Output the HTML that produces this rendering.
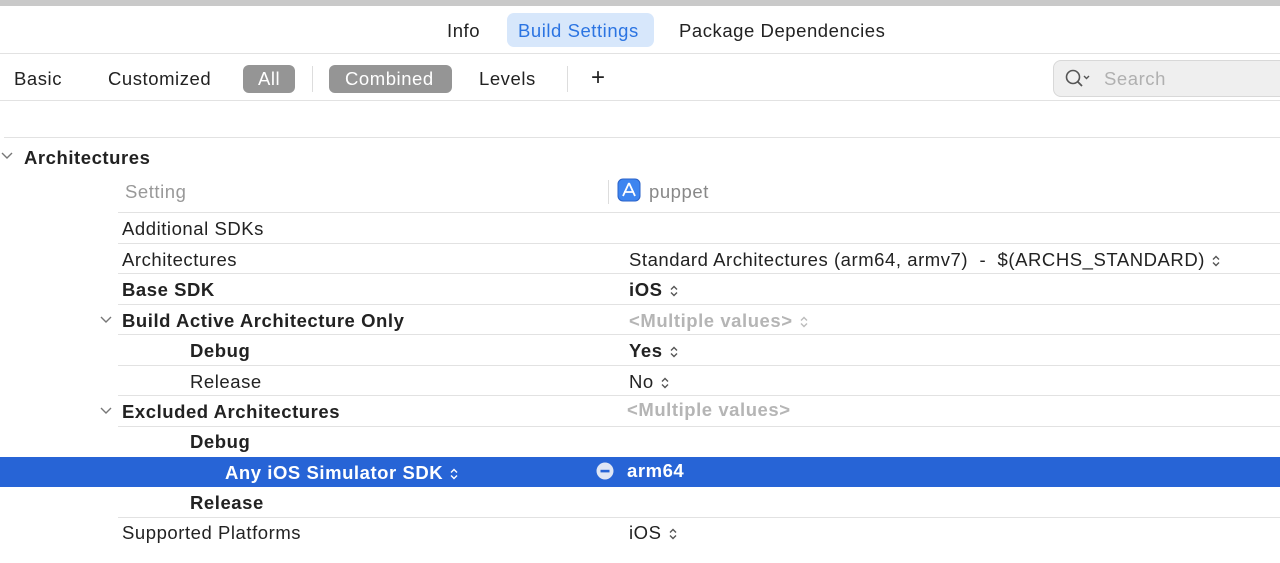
<!DOCTYPE html>
<html><head><style>
body{margin:0;width:1280px;height:563px;background:#fff;font-family:"Liberation Sans",sans-serif;font-size:18.5px;letter-spacing:0.55px;color:#222;position:relative;overflow:hidden}
.a{position:absolute;white-space:nowrap}
.ln{position:absolute;height:1px;background:#e2e2e2}
.b{font-weight:bold}
.g{color:#b5b5b5}
.ud{display:inline-block;width:8px;height:12px;margin-left:7px;vertical-align:-1px}
</style></head><body>
<svg width="0" height="0" style="position:absolute"><defs><symbol id="ud" viewBox="0 0 8 12"><path d="M1 4.5L4 1.5 7 4.5M1 7.5L4 10.5 7 7.5" fill="none" stroke="currentColor" stroke-width="1.4"/></symbol></defs></svg>
<div class="a" style="left:0;top:0;width:1280px;height:6px;background:#c9c9c9"></div>
<div class="a" style="left:447px;top:20px">Info</div>
<div class="a" style="left:507px;top:13px;width:147px;height:34px;background:#d7e7fb;border-radius:7px"></div>
<div class="a" style="left:518px;top:20px;color:#2b74e2">Build Settings</div>
<div class="a" style="left:679px;top:20px">Package Dependencies</div>
<div class="ln" style="left:0;top:53px;width:1280px"></div>
<div class="a" style="left:14px;top:68px">Basic</div>
<div class="a" style="left:108px;top:68px">Customized</div>
<div class="a" style="left:243px;top:65px;width:52px;height:28px;background:#959595;border-radius:6px"></div>
<div class="a" style="left:258px;top:68px;color:#fff">All</div>
<div class="a" style="left:312px;top:66px;width:1px;height:26px;background:#ddd"></div>
<div class="a" style="left:329px;top:65px;width:123px;height:28px;background:#959595;border-radius:6px"></div>
<div class="a" style="left:345px;top:68px;color:#fff">Combined</div>
<div class="a" style="left:479px;top:68px">Levels</div>
<div class="a" style="left:567px;top:66px;width:1px;height:26px;background:#ddd"></div>
<div class="a" style="left:591px;top:64px;font-size:24px;font-weight:300">+</div>
<div class="a" style="left:1053px;top:60px;width:240px;height:35px;background:#efefef;border:1px solid #d8d8d8;border-radius:8px"></div>
<svg class="a" style="left:1064px;top:68px" width="28" height="22"><circle cx="9" cy="9" r="6.5" fill="none" stroke="#555" stroke-width="1.6"/><line x1="13.5" y1="13.5" x2="18" y2="18" stroke="#555" stroke-width="1.8"/><path d="M20 8l2.5 2.5 2.5-2.5" fill="none" stroke="#555" stroke-width="1.4"/></svg>
<div class="a" style="left:1104px;top:68px;color:#b0b0b0">Search</div>
<div class="ln" style="left:0;top:100px;width:1280px"></div>
<div class="ln" style="left:4px;top:137px;width:1276px"></div>
<svg class="a" style="left:1px;top:151px" width="12" height="10"><path d="M1 2l5 5 5-5" fill="none" stroke="#777" stroke-width="1.4"/></svg>
<div class="a b" style="left:24px;top:147px">Architectures</div>
<div class="a" style="left:125px;top:181px;color:#999">Setting</div>
<div class="a" style="left:608px;top:180px;width:1px;height:24px;background:#ddd"></div>
<svg class="a" style="left:617px;top:178px" width="24" height="24"><rect x="1" y="1" width="22" height="22" rx="5" fill="#3d85f0" stroke="#2a62c9"/><path d="M12 5L6 18M12 5l6 13M7 14h10" stroke="#fff" stroke-width="1.8" fill="none"/></svg>
<div class="a" style="left:649px;top:181px;color:#888">puppet</div>
<div class="ln" style="left:118px;top:212px;width:1162px"></div>
<div class="a" style="left:122px;top:218px">Additional SDKs</div>
<div class="ln" style="left:118px;top:243px;width:1162px"></div>
<div class="a" style="left:122px;top:249px">Architectures</div>
<div class="a" style="left:629px;top:249px">Standard Architectures (arm64, armv7)&nbsp; - &nbsp;$(ARCHS_STANDARD)<svg class="ud" style="color:#555"><use href="#ud"/></svg></div>
<div class="ln" style="left:118px;top:273px;width:1162px"></div>
<div class="a b" style="left:122px;top:279px">Base SDK</div>
<div class="a b" style="left:629px;top:279px">iOS<svg class="ud" style="color:#555"><use href="#ud"/></svg></div>
<div class="ln" style="left:118px;top:304px;width:1162px"></div>
<svg class="a" style="left:100px;top:315px" width="12" height="10"><path d="M1 2l5 5 5-5" fill="none" stroke="#777" stroke-width="1.4"/></svg>
<div class="a b" style="left:122px;top:310px">Build Active Architecture Only</div>
<div class="a b g" style="left:629px;top:310px">&lt;Multiple values&gt;<svg class="ud" style="color:#bbb"><use href="#ud"/></svg></div>
<div class="ln" style="left:118px;top:334px;width:1162px"></div>
<div class="a b" style="left:190px;top:340px">Debug</div>
<div class="a b" style="left:629px;top:340px">Yes<svg class="ud" style="color:#555"><use href="#ud"/></svg></div>
<div class="ln" style="left:118px;top:365px;width:1162px"></div>
<div class="a" style="left:190px;top:371px">Release</div>
<div class="a" style="left:629px;top:371px">No<svg class="ud" style="color:#555"><use href="#ud"/></svg></div>
<div class="ln" style="left:118px;top:395px;width:1162px"></div>
<svg class="a" style="left:100px;top:406px" width="12" height="10"><path d="M1 2l5 5 5-5" fill="none" stroke="#777" stroke-width="1.4"/></svg>
<div class="a b" style="left:122px;top:401px">Excluded Architectures</div>
<div class="a b g" style="left:627px;top:399px">&lt;Multiple values&gt;</div>
<div class="ln" style="left:118px;top:426px;width:1162px"></div>
<div class="a b" style="left:190px;top:431px">Debug</div>
<div class="a" style="left:0;top:457px;width:1280px;height:30px;background:#2764d6"></div>
<div class="a b" style="left:225px;top:462px;color:#fff">Any iOS Simulator SDK<svg class="ud" style="color:#fff"><use href="#ud"/></svg></div>
<svg class="a" style="left:596px;top:462px" width="18" height="18"><circle cx="9" cy="9" r="8.5" fill="#dfe6f5"/><rect x="4.5" y="7.8" width="9" height="2.6" fill="#2764d6"/></svg>
<div class="a b" style="left:627px;top:460px;color:#fff">arm64</div>
<div class="a b" style="left:190px;top:492px">Release</div>
<div class="ln" style="left:118px;top:517px;width:1162px"></div>
<div class="a" style="left:122px;top:522px">Supported Platforms</div>
<div class="a" style="left:629px;top:522px">iOS<svg class="ud" style="color:#555"><use href="#ud"/></svg></div>
</body></html>
